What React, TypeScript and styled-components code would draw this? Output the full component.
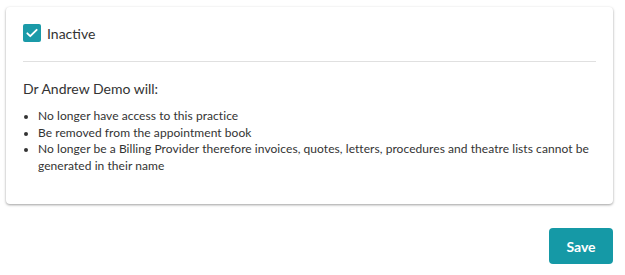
import styled, { createGlobalStyle } from "styled-components";

const GlobalStyle = createGlobalStyle`
  body {
    margin: 0;
    background: #ffffff;
    font-family: "Segoe UI", Lato, "Noto Sans", sans-serif;
    color: #333333;
  }
`;

const Page = styled.div`
  width: 625px;
  height: 275px;
  padding: 7px 12px 0 6px;
  box-sizing: border-box;
  display: flex;
  flex-direction: column;
`;

const Card = styled.div`
  background: #ffffff;
  border-radius: 4px;
  box-shadow: 0 1px 3px rgba(0, 0, 0, 0.28), 0 1px 2px rgba(0, 0, 0, 0.12);
  padding: 16px 17px 30px 17px;
  height: 197px;
  box-sizing: border-box;
`;

const CheckRow = styled.label`
  display: flex;
  align-items: center;
  gap: 6px;
  font-size: 14px;
  color: #333;
  height: 20px;
`;

const CheckBox = styled.span`
  width: 18px;
  height: 18px;
  border-radius: 2px;
  background: #1a9aa8;
  display: flex;
  align-items: center;
  justify-content: center;
`;

const Divider = styled.hr`
  border: none;
  border-top: 1px solid #e0e0e0;
  margin: 18px 0 18px 0;
`;

const Heading = styled.div`
  font-size: 14px;
  color: #333;
  line-height: 18px;
  margin-bottom: 10px;
`;

const List = styled.ul`
  margin: 0;
  padding-left: 15px;
  font-size: 12px;
  letter-spacing: 0.06px;
  line-height: 16.5px;
  color: #333;
  width: 565px;

  li::marker {
    font-size: 11px;
  }
`;

const Footer = styled.div`
  display: flex;
  justify-content: flex-end;
  margin-top: 24px;
`;

const SaveButton = styled.button`
  background: #1599a6;
  color: #ffffff;
  border: none;
  border-radius: 4px;
  width: 64px;
  height: 36px;
  font-family: inherit;
  font-size: 14px;
  font-weight: 700;
  cursor: pointer;
`;

export default function App() {
  return (
    <>
      <GlobalStyle />
      <Page>
        <Card>
          <CheckRow>
            <CheckBox>
              <svg width="14" height="14" viewBox="0 0 24 24" fill="none">
                <path
                  d="M4 12.5l5 5L20 6.5"
                  stroke="#ffffff"
                  strokeWidth="3.2"
                  strokeLinecap="round"
                  strokeLinejoin="round"
                />
              </svg>
            </CheckBox>
            Inactive
          </CheckRow>
          <Divider />
          <Heading>Dr Andrew Demo will:</Heading>
          <List>
            <li>No longer have access to this practice</li>
            <li>Be removed from the appointment book</li>
            <li>
              No longer be a Billing Provider therefore invoices, quotes,
              letters, procedures and theatre lists cannot be generated in
              their name
            </li>
          </List>
        </Card>
        <Footer>
          <SaveButton>Save</SaveButton>
        </Footer>
      </Page>
    </>
  );
}
